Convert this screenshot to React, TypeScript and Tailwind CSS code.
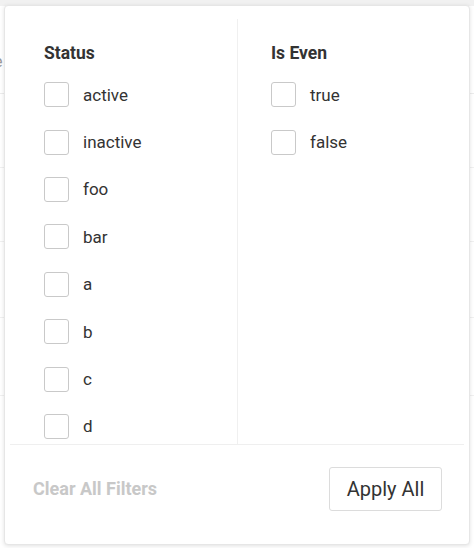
import React from "react";

const statusItems = ["active", "inactive", "foo", "bar", "a", "b", "c", "d"];
const evenItems = ["true", "false"];

function Row({ label }: { label: string }) {
  return (
    <label className="flex h-[47.4px] shrink-0 items-center gap-[14px]">
      <span className="block h-[25px] w-[25px] shrink-0 rounded-[3px] border border-[#c9c9c9] bg-white" />
      <span className="text-[17px] leading-[20px] text-[#333]">{label}</span>
    </label>
  );
}

export default function App() {
  return (
    <div
      className="relative h-[548px] w-[474px] overflow-hidden bg-white"
      style={{ fontFamily: "Roboto, 'Noto Sans', Arial, sans-serif" }}
    >
      {/* page behind the popover */}
      <div className="flex flex-col">
        <div className="h-[6px] bg-[#f1f1f1]" />
        <div className="-ml-[6px] h-[88px] border-b border-[#ececec] pt-[48px] text-[16px] leading-[16px] text-[#999]">
          e
        </div>
        <div className="h-[74px] border-b border-[#f0f0f0]" />
        <div className="h-[74px] border-b border-[#f0f0f0]" />
        <div className="h-[76px] border-b border-[#f0f0f0]" />
        <div className="h-[78px] border-b border-[#f0f0f0]" />
      </div>

      {/* popover */}
      <div className="absolute left-[4px] top-[5px] flex h-[540px] w-[466px] flex-col rounded-[4px] border border-[#e6e6e6] bg-white shadow-[0_1px_4px_rgba(0,0,0,0.12)]">
        <div className="mt-[13px] flex h-[425px] overflow-hidden">
          <div className="flex w-[232px] shrink-0 flex-col overflow-hidden pl-[39px] pt-[24px]">
            <div className="mb-[8px] text-[17.5px] font-bold leading-[20px] text-[#333]">Status</div>
            {statusItems.map((s) => (
              <Row key={s} label={s} />
            ))}
          </div>
          <div className="flex flex-1 flex-col border-l border-[#f0f0f0] pl-[33px] pt-[24px]">
            <div className="mb-[8px] text-[17.5px] font-bold leading-[20px] text-[#333]">Is Even</div>
            {evenItems.map((s) => (
              <Row key={s} label={s} />
            ))}
          </div>
        </div>
        <div className="mx-[5px] flex flex-1 items-start justify-between border-t border-[#efefef] pl-[23px] pr-[22px] pt-[22px]">
          <button className="mt-[12px] text-[18px] font-bold leading-[20px] text-[#c8c8c8]">
            Clear All Filters
          </button>
          <button className="h-[44px] w-[113px] rounded-[3px] border border-[#dcdcdc] bg-white text-[20px] text-[#333]">
            Apply All
          </button>
        </div>
      </div>
    </div>
  );
}
